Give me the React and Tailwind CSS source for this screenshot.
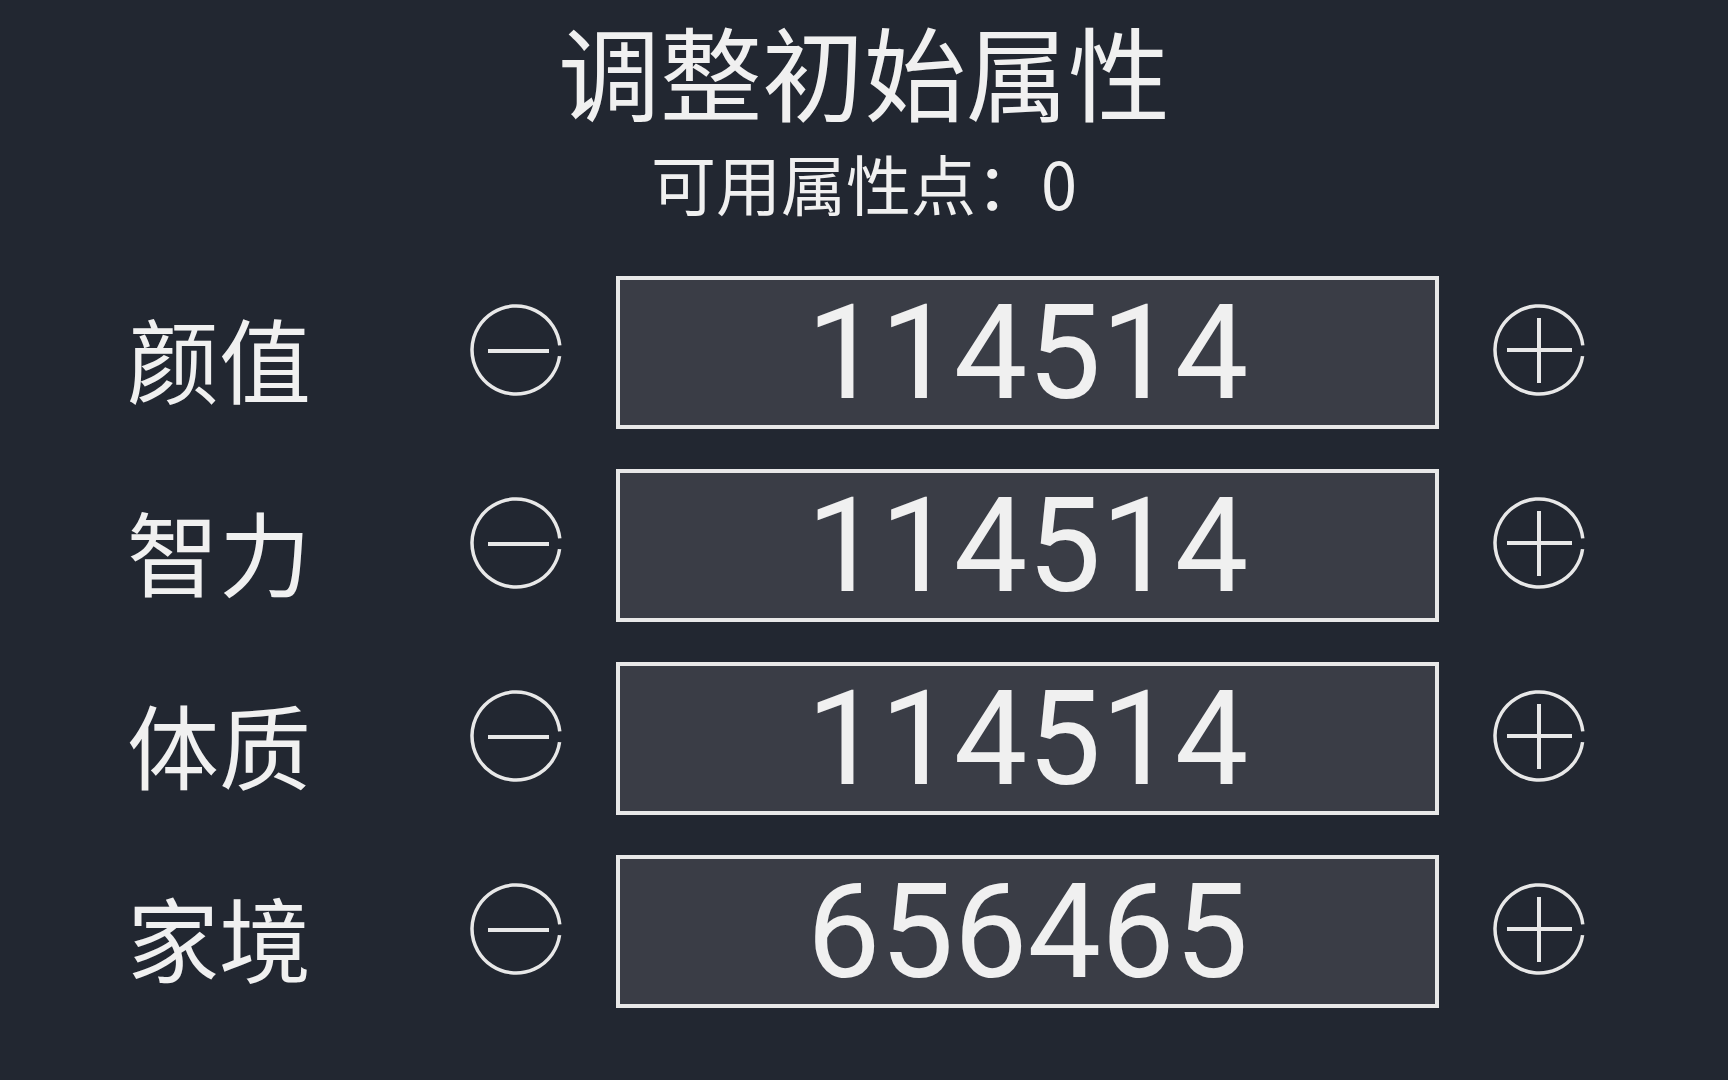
import React from 'react';

const STATS = [
    { name: "颜值", value: 114514 },
    { name: "智力", value: 114514 },
    { name: "体质", value: 114514 },
    { name: "家境", value: 656465 },
];

// circle with a tiny gap on the right, like the original icon
const Ring = () => (
    <path
        d="M 89.57 52.12 A 44 44 0 1 1 89.76 41.40"
        fill="none"
        stroke="#e8e8e8"
        strokeWidth="3.5"
    />
);

const MinusIcon = () => (
    <svg width="92" height="92" viewBox="0 0 92 92">
        <Ring/>
        <line x1="18" y1="47" x2="79" y2="47" stroke="#e8e8e8" strokeWidth="4"/>
    </svg>
);

const PlusIcon = () => (
    <svg width="92" height="92" viewBox="0 0 92 92">
        <Ring/>
        <line x1="14" y1="46" x2="79" y2="46" stroke="#e8e8e8" strokeWidth="4"/>
        <line x1="46" y1="14" x2="46" y2="79" stroke="#e8e8e8" strokeWidth="4"/>
    </svg>
);

const StatRow = ({ name, value }) => (
    <div className="flex items-center h-[153px]">
        <div className="w-[343px] pt-[8px] text-[92px] leading-[1.2] text-[#f0f0f0] font-['Noto_Sans_CJK_SC',sans-serif]">
            {name}
        </div>
        <button className="w-[92px] h-[92px] mb-[6px] flex items-center justify-center">
            <MinusIcon/>
        </button>
        <div className="ml-[54px] w-[823px] h-[153px] border-4 border-[#e8e8e8] bg-[#3a3d46] flex items-center justify-center">
            <span className="text-[131px] leading-[1.1] text-[#f0f0f0] font-['Roboto',sans-serif]">
                {value}
            </span>
        </div>
        <button className="ml-[54px] w-[92px] h-[92px] mb-[6px] flex items-center justify-center">
            <PlusIcon/>
        </button>
    </div>
);

const App = () => {
    return (
        <div className="w-full min-h-[1080px] bg-[#222731] flex flex-col items-center font-['Noto_Sans_CJK_SC',sans-serif] text-[#f0f0f0]">
            {/* Header */}
            <h1 className="mt-[9px] text-[102px] leading-[1.2] font-normal whitespace-nowrap">调整初始属性</h1>
            <p className="mt-[12px] text-[65px] leading-[1.2] whitespace-nowrap">可用属性点：0</p>

            {/* Stats */}
            <div className="mt-[55px] w-full pl-[127px] flex flex-col gap-[40px]">
                {STATS.map((s) => (
                    <StatRow key={s.name} name={s.name} value={s.value}/>
                ))}
            </div>
        </div>
    );
};

export default App;
